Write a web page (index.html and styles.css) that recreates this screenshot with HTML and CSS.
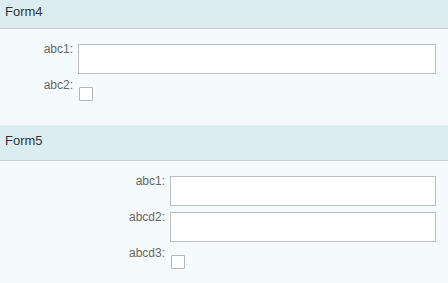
FILE: index.html
```html
<!DOCTYPE html>
<html lang="en">
<head>
  <meta charset="UTF-8" />
  <title>Forms</title>
  <link rel="stylesheet" href="styles.css">
</head>
<body>

  <div class="panel">
    <div class="panel-header first">Form4</div>
    <div class="panel-body form4">
      <label class="field-label">abc1:</label>
      <input class="text-field" type="text">
      <label class="field-label">abc2:</label>
      <div class="check-wrap"><span class="check-box"></span></div>
    </div>
  </div>

  <div class="panel">
    <div class="panel-header">Form5</div>
    <div class="panel-body form5">
      <label class="field-label">abc1:</label>
      <input class="text-field" type="text">
      <label class="field-label">abcd2:</label>
      <input class="text-field" type="text">
      <label class="field-label">abcd3:</label>
      <div class="check-wrap"><span class="check-box"></span></div>
    </div>
  </div>

</body>
</html>
```

FILE: styles.css
```css
/* Base */
* {
  box-sizing: border-box;
  margin: 0;
  padding: 0;
}

body {
  font-family: "Liberation Sans", Arial, sans-serif;
  background: #f5fafc;
  width: 448px;
  height: 283px;
  overflow: hidden;
}

/* Panel header */
.panel-header {
  background: #dcedf2;
  border-bottom: 1px solid #c9d3d7;
  color: #333;
  font-size: 13px;
  line-height: 15px;
  padding: 8px 5px 12px;
}

.panel-header.first {
  padding: 4px 5px 9px;
}

/* Panel body as label / field grid */
.panel-body {
  display: grid;
  align-content: start;
  column-gap: 5px;
  row-gap: 6px;
  padding: 15px 12px 0 0;
  background: #f5fafc;
}

.form4 {
  grid-template-columns: 73px 1fr;
  height: 96px;
}

.form5 {
  grid-template-columns: 165px 1fr;
}

.field-label {
  text-align: right;
  font-size: 12px;
  line-height: 14px;
  color: #666;
  margin-top: -2px;
}

.text-field {
  height: 30px;
  border: 1px solid #bdbdbd;
  background: #fff;
  outline: none;
  width: 100%;
}

.check-wrap {
  padding-top: 7px;
  padding-left: 1px;
}

.check-box {
  display: block;
  width: 14px;
  height: 14px;
  border: 1px solid #b5b5b5;
  background: #fff;
  border-radius: 1px;
}
```
